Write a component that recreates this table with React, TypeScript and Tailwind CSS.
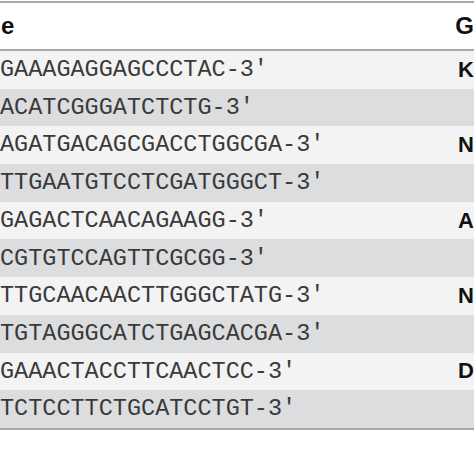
import React from 'react';

const rows: { seq: string; gene?: string }[] = [
  { seq: "GAAAGAGGAGCCCTAC-3'", gene: 'K' },
  { seq: "ACATCGGGATCTCTG-3'" },
  { seq: "AGATGACAGCGACCTGGCGA-3'", gene: 'N' },
  { seq: "TTGAATGTCCTCGATGGGCT-3'" },
  { seq: "GAGACTCAACAGAAGG-3'", gene: 'A' },
  { seq: "CGTGTCCAGTTCGCGG-3'" },
  { seq: "TTGCAACAACTTGGGCTATG-3'", gene: 'N' },
  { seq: "TGTAGGGCATCTGAGCACGA-3'" },
  { seq: "GAAACTACCTTCAACTCC-3'", gene: 'D' },
  { seq: "TCTCCTTCTGCATCCTGT-3'" },
];

const App: React.FC = () => {
  return (
    <div className="w-[474px] h-[474px] bg-white overflow-hidden">
      <div className="pt-px">
        {/* Table */}
        <div className="border-t-2 border-b-2 border-[#a9a9a9]">
          {/* Header */}
          <div className="flex h-[48px] items-center bg-white border-b-2 border-[#a9a9a9] font-['Liberation_Sans',Arial,sans-serif] font-bold text-[24px] text-[#111] leading-none">
            <div className="w-[460px] pl-[1px]">e</div>
            <div className="flex-1 whitespace-nowrap">G</div>
          </div>

          {/* Body rows */}
          {rows.map((r, i) => (
            <div
              key={i}
              className={`flex h-[37.7px] items-center ${i % 2 === 0 ? 'bg-[#f3f3f3]' : 'bg-[#dcdddf]'}`}
            >
              <div className="w-[460px] whitespace-nowrap font-['Liberation_Mono','Courier_New',monospace] text-[23.5px] text-[#3a3a3a] leading-none">
                {r.seq}
              </div>
              <div className="flex-1 whitespace-nowrap font-['Liberation_Sans',Arial,sans-serif] font-bold text-[22px] text-[#111] leading-none">
                {r.gene ?? ''}
              </div>
            </div>
          ))}
        </div>
      </div>
    </div>
  );
};

export default App;
